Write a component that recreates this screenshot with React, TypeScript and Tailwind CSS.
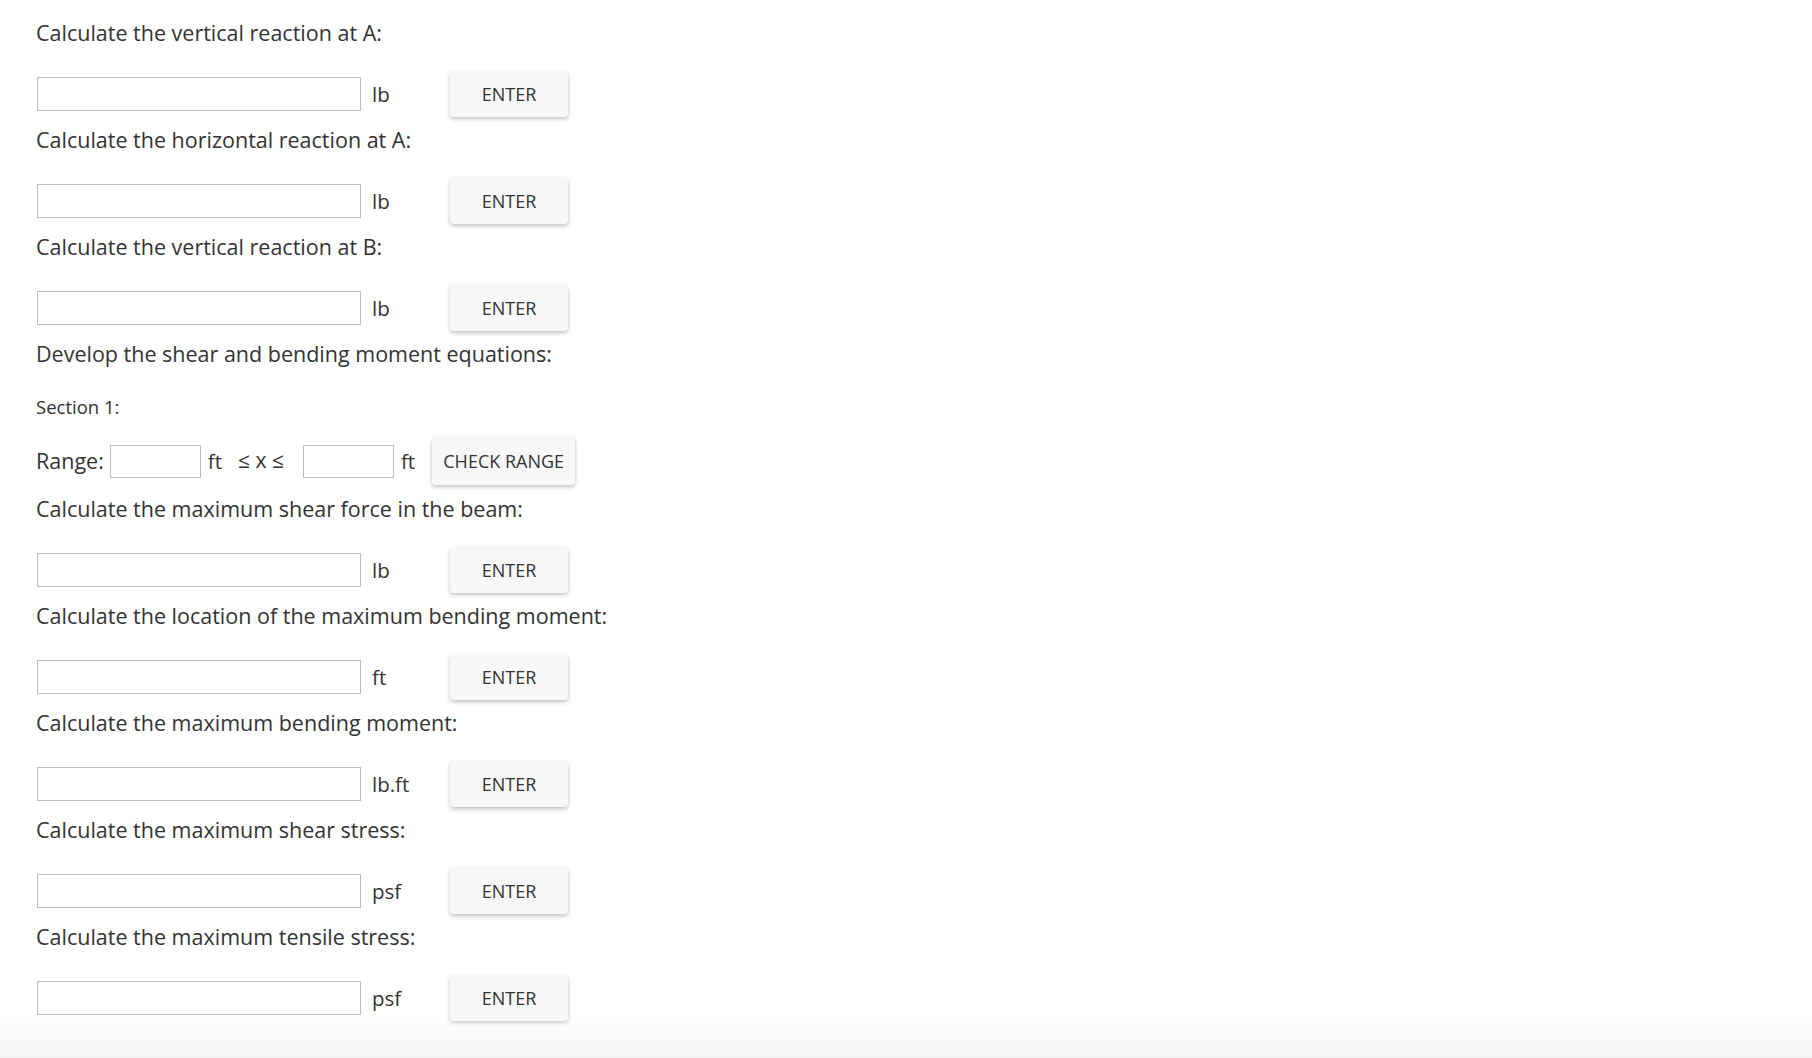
const font = { fontFamily: '"Open Sans", "Noto Sans", sans-serif' };

type Q = { title: string; unit: string };

const top: Q[] = [
  { title: "Calculate the vertical reaction at A:", unit: "lb" },
  { title: "Calculate the horizontal reaction at A:", unit: "lb" },
  { title: "Calculate the vertical reaction at B:", unit: "lb" },
];

const bottom: Q[] = [
  { title: "Calculate the maximum shear force in the beam:", unit: "lb" },
  { title: "Calculate the location of the maximum bending moment:", unit: "ft" },
  { title: "Calculate the maximum bending moment:", unit: "lb.ft" },
  { title: "Calculate the maximum shear stress:", unit: "psf" },
  { title: "Calculate the maximum tensile stress:", unit: "psf" },
];

function Title({ children }: { children: React.ReactNode }) {
  return <div className="-ml-px pt-[1px] text-[21.5px] leading-[30px] text-[#333]">{children}</div>;
}

function Button({ label, w }: { label: string; w: string }) {
  return (
    <button
      className={`${w} h-[46px] rounded-[4px] bg-[#f8f8f8] text-[18px] text-[#333] shadow-[0_2px_4px_rgba(0,0,0,0.25)]`}
    >
      {label}
    </button>
  );
}

function Question({ q }: { q: Q }) {
  return (
    <div className="pb-[7px]">
      <Title>{q.title}</Title>
      <div className="mt-[23px] flex items-center">
        <input className="w-[324px] h-[34px] border border-[#bdbdbd] bg-white outline-none" />
        <span className="w-[89px] pl-[11px] text-[20.5px] text-[#333]">{q.unit}</span>
        <Button label="ENTER" w="w-[118px]" />
      </div>
    </div>
  );
}

export default function App() {
  return (
    <div className="relative min-h-screen bg-white" style={font}>
      <div className="pl-[37px] pt-[17px]">
        {top.map((q, i) => (
          <Question key={i} q={q} />
        ))}
        <Title>Develop the shear and bending moment equations:</Title>
        <div className="-ml-px mt-[26px] text-[18.5px] leading-[24px] text-[#333]">Section 1:</div>
        <div className="-ml-px mt-[18px] mb-[8px] flex items-center h-[48px] text-[#333]">
          <span className="text-[21.5px]">Range:</span>
          <input className="ml-[6px] w-[91px] h-[33px] border border-[#bdbdbd] bg-white outline-none" />
          <span className="ml-[7px] text-[20.5px]">ft</span>
          <span className="ml-[16px] text-[21px]">≤ x ≤</span>
          <input className="ml-[19px] w-[91px] h-[33px] border border-[#bdbdbd] bg-white outline-none" />
          <span className="ml-[7px] text-[20.5px]">ft</span>
          <button className="ml-[17px] w-[143px] h-[48px] rounded-[4px] bg-[#f8f8f8] text-[18px] text-[#333] shadow-[0_2px_4px_rgba(0,0,0,0.25)]">
            CHECK RANGE
          </button>
        </div>
        {bottom.map((q, i) => (
          <Question key={i} q={q} />
        ))}
      </div>
      <div className="pointer-events-none absolute bottom-0 left-0 right-0 h-[45px] bg-gradient-to-b from-white/0 to-[#f4f4f4]" />
    </div>
  );
}
